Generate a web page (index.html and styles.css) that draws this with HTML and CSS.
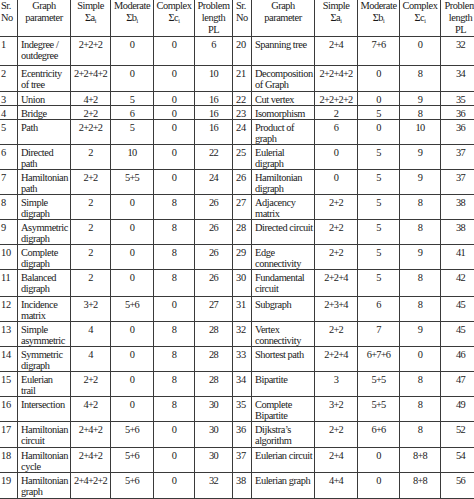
FILE: index.html
```html
<!DOCTYPE html>
<html>
<head>
<meta charset="utf-8">
<link rel="stylesheet" href="styles.css">
</head>
<body>
<table class="grid">
<colgroup>
<col class="c-sr-l"><col class="c-gp-l"><col class="c-si-l"><col class="c-mo-l"><col class="c-co-l"><col class="c-pl-l">
<col class="c-sr-r"><col class="c-gp-r"><col class="c-si-r"><col class="c-mo-r"><col class="c-co-r"><col class="c-pl-r">
</colgroup>
<thead>
<tr class="head">
<th class="sr">Sr.<br>No</th><th>Graph<br>parameter</th><th>Simple<br>Σa<sub>i</sub></th><th>Moderate<br>Σb<sub>i</sub></th><th>Complex<br>Σc<sub>i</sub></th><th>Problem<br>length<br>PL</th>
<th class="sr">Sr.<br>No</th><th>Graph<br>parameter</th><th>Simple<br>Σa<sub>i</sub></th><th>Moderate<br>Σb<sub>i</sub></th><th>Complex<br>Σc<sub>i</sub></th><th>Problem<br>length<br>PL</th>
</tr>
</thead>
<tbody>
<tr class="h29"><td>1</td><td class="name">Indegree / outdegree</td><td>2+2+2</td><td>0</td><td>0</td><td>6</td><td>20</td><td class="name">Spanning tree</td><td>2+4</td><td>7+6</td><td>0</td><td>32</td></tr>
<tr class="h26"><td>2</td><td class="name">Ecentricity of tree</td><td>2+2+4+2</td><td>0</td><td>0</td><td>10</td><td>21</td><td class="name">Decomposition of Graph</td><td>2+2+4+2</td><td>0</td><td>8</td><td>34</td></tr>
<tr class="h14"><td>3</td><td class="name">Union</td><td>4+2</td><td>5</td><td>0</td><td>16</td><td>22</td><td class="name">Cut vertex</td><td>2+2+2+2</td><td>0</td><td>9</td><td>35</td></tr>
<tr class="h14"><td>4</td><td class="name">Bridge</td><td>2+2</td><td>6</td><td>0</td><td>16</td><td>23</td><td class="name">Isomorphism</td><td>2</td><td>5</td><td>8</td><td>36</td></tr>
<tr class="h25"><td>5</td><td class="name">Path</td><td>2+2+2</td><td>5</td><td>0</td><td>16</td><td>24</td><td class="name">Product of graph</td><td>6</td><td>0</td><td>10</td><td>36</td></tr>
<tr class="h25"><td>6</td><td class="name">Directed path</td><td>2</td><td>10</td><td>0</td><td>22</td><td>25</td><td class="name">Eulerial digraph</td><td>0</td><td>5</td><td>9</td><td>37</td></tr>
<tr class="h25"><td>7</td><td class="name">Hamiltonian path</td><td>2+2</td><td>5+5</td><td>0</td><td>24</td><td>26</td><td class="name">Hamiltonian digraph</td><td>0</td><td>5</td><td>9</td><td>37</td></tr>
<tr class="h25"><td>8</td><td class="name">Simple digraph</td><td>2</td><td>0</td><td>8</td><td>26</td><td>27</td><td class="name">Adjacency matrix</td><td>2+2</td><td>5</td><td>8</td><td>38</td></tr>
<tr class="h25"><td>9</td><td class="name">Asymmetric digraph</td><td>2</td><td>0</td><td>8</td><td>26</td><td>28</td><td class="name">Directed circuit</td><td>2+2</td><td>5</td><td>8</td><td>38</td></tr>
<tr class="h25"><td>10</td><td class="name">Complete digraph</td><td>2</td><td>0</td><td>8</td><td>26</td><td>29</td><td class="name">Edge connectivity</td><td>2+2</td><td>5</td><td>9</td><td>41</td></tr>
<tr class="h27"><td>11</td><td class="name">Balanced digraph</td><td>2</td><td>0</td><td>8</td><td>26</td><td>30</td><td class="name">Fundamental circuit</td><td>2+2+4</td><td>5</td><td>8</td><td>42</td></tr>
<tr class="h25"><td>12</td><td class="name">Incidence matrix</td><td>3+2</td><td>5+6</td><td>0</td><td>27</td><td>31</td><td class="name">Subgraph</td><td>2+3+4</td><td>6</td><td>8</td><td>45</td></tr>
<tr class="h25"><td>13</td><td class="name">Simple asymmetric</td><td>4</td><td>0</td><td>8</td><td>28</td><td>32</td><td class="name">Vertex connectivity</td><td>2+2</td><td>7</td><td>9</td><td>45</td></tr>
<tr class="h25"><td>14</td><td class="name">Symmetric digraph</td><td>4</td><td>0</td><td>8</td><td>28</td><td>33</td><td class="name">Shortest path</td><td>2+2+4</td><td>6+7+6</td><td>0</td><td>46</td></tr>
<tr class="h25"><td>15</td><td class="name">Eulerian trail</td><td>2+2</td><td>0</td><td>8</td><td>28</td><td>34</td><td class="name">Bipartite</td><td>3</td><td>5+5</td><td>8</td><td>47</td></tr>
<tr class="h25"><td>16</td><td class="name">Intersection</td><td>4+2</td><td>0</td><td>8</td><td>30</td><td>35</td><td class="name">Complete Bipartite</td><td>3+2</td><td>5+5</td><td>8</td><td>49</td></tr>
<tr class="h26"><td>17</td><td class="name">Hamiltonian circuit</td><td>2+4+2</td><td>5+6</td><td>0</td><td>30</td><td>36</td><td class="name">Dijkstra’s algorithm</td><td>2+2</td><td>6+6</td><td>8</td><td>52</td></tr>
<tr class="h24"><td>18</td><td class="name">Hamiltonian cycle</td><td>2+4+2</td><td>5+6</td><td>0</td><td>30</td><td>37</td><td class="name">Eulerian circuit</td><td>2+4</td><td>0</td><td>8+8</td><td>54</td></tr>
<tr class="h26"><td>19</td><td class="name">Hamiltonian graph</td><td>2+4+2+2</td><td>5+6</td><td>0</td><td>32</td><td>38</td><td class="name">Eulerian graph</td><td>4+4</td><td>0</td><td>8+8</td><td>56</td></tr>
</tbody>
</table>
</body>
</html>
```
FILE: styles.css
```css
html, body {
  margin: 0;
  padding: 0;
  overflow: hidden;
  background: #ffffff;
}
.grid {
  margin-left: -3px;
  width: 483px;
  table-layout: fixed;
  border-collapse: collapse;
  font-family: "Liberation Serif", "Times New Roman", serif;
  font-size: 10.4px;
  letter-spacing: -0.45px;
  line-height: 11px;
  color: #1a1a1a;
}
.c-sr-l { width: 20px; }
.c-gp-l { width: 53px; }
.c-si-l { width: 40px; }
.c-mo-l { width: 43px; }
.c-co-l { width: 41px; }
.c-pl-l { width: 38px; }
.c-sr-r { width: 19px; }
.c-gp-r { width: 63px; }
.c-si-r { width: 43px; }
.c-mo-r { width: 42px; }
.c-co-r { width: 41px; }
.c-pl-r { width: 40px; }
.grid th, .grid td {
  border: 1px solid #3a3a3a;
  padding: 2px 1px 0;
  vertical-align: top;
  text-align: center;
  overflow: visible;
}
.grid td {
  letter-spacing: -0.8px;
}
.grid th {
  font-weight: normal;
  padding-top: 0;
  line-height: 12px;
}
.grid .head {
  height: 32px;
}
.grid .head th {
  border-top: none;
}
.grid th.sr {
  text-align: left;
  padding-left: 3px;
}
.grid td:nth-child(6n+1) {
  text-align: left;
  padding-left: 3px;
  letter-spacing: -0.3px;
}
.grid td.name {
  text-align: left;
  padding-left: 3px;
  letter-spacing: -0.45px;
}
.grid sub {
  font-size: 6px;
  line-height: 0;
  vertical-align: -2px;
}
.h14 { height: 14px; }
.h24 { height: 24px; }
.h25 { height: 25px; }
.h26 { height: 26px; }
.h27 { height: 27px; }
.h29 { height: 29px; }
```
